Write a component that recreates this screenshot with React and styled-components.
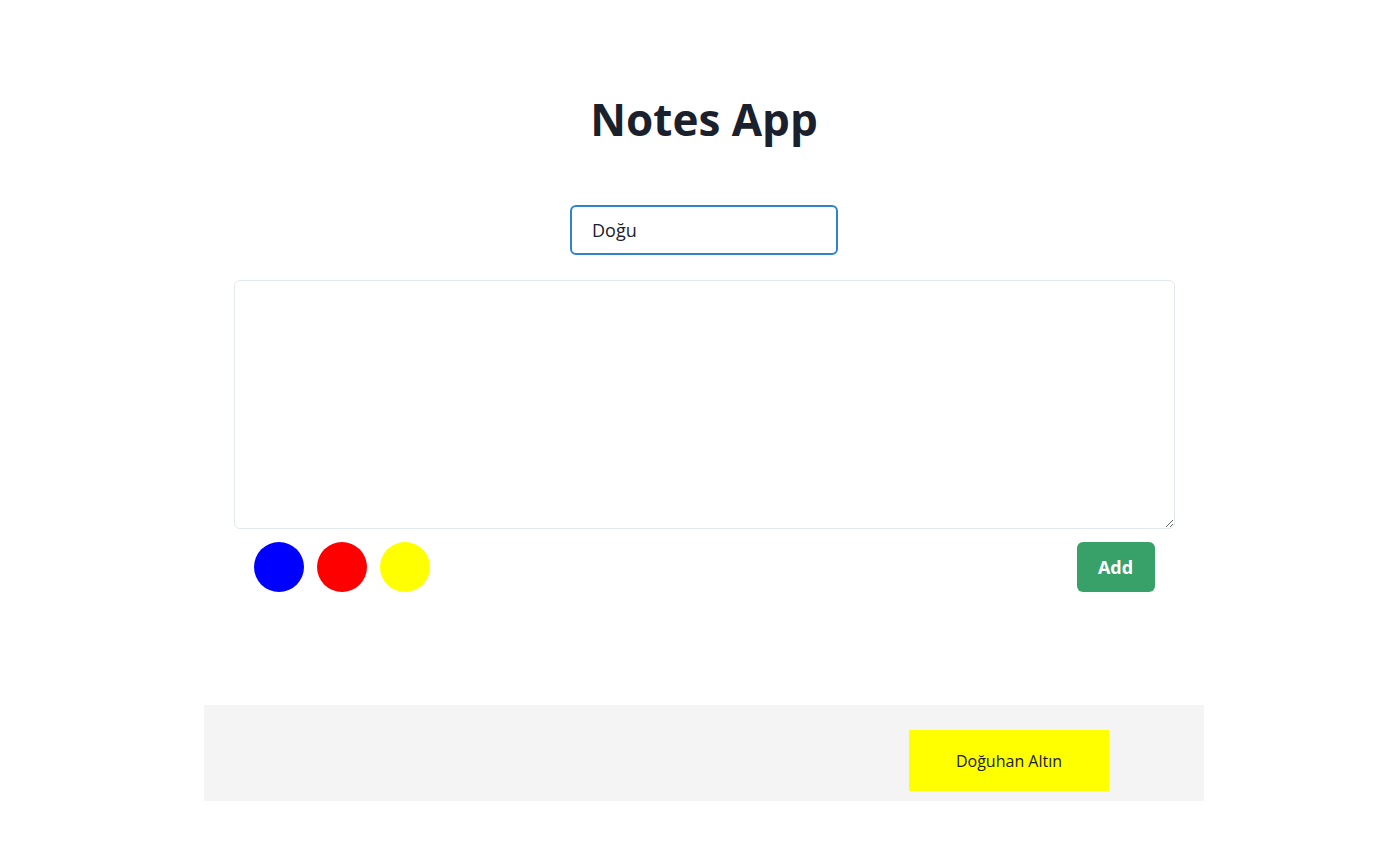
import React, { useState } from 'react';
import styled, { createGlobalStyle } from 'styled-components';

const GlobalStyle = createGlobalStyle`
  body {
    margin: 0;
    background: #fff;
    font-family: "Open Sans", "Noto Sans", sans-serif;
    color: #1A202C;
  }
  * { box-sizing: border-box; }
`;

const Page = styled.div`
  padding-left: 14px;
  padding-top: 85px;
`;

const Container = styled.div`
  width: 1000px;
  margin: 0 auto;
  display: flex;
  flex-direction: column;
  align-items: center;
`;

const Title = styled.h1`
  margin: 0;
  font-size: 44px;
  font-weight: 700;
  line-height: 68px;
  color: #1A202C;
`;

const SearchInput = styled.input`
  margin-top: 52px;
  width: 268px;
  height: 50px;
  padding: 0 20px;
  border: 2px solid #3182CE;
  border-radius: 6px;
  font-family: inherit;
  font-size: 18px;
  color: #1A202C;
  outline: none;
`;

const NoteArea = styled.textarea`
  margin-top: 25px;
  width: 941px;
  height: 249px;
  border: 1px solid #E2E8F0;
  border-radius: 6px;
  padding: 12px 16px;
  font-family: inherit;
  font-size: 16px;
  outline: none;
  display: block;
`;

const Actions = styled.div`
  margin-top: 13px;
  width: 941px;
  padding: 0 20px;
  display: flex;
  align-items: center;
  justify-content: space-between;
`;

const Colors = styled.div`
  display: flex;
  gap: 13px;
`;

const ColorDot = styled.button`
  width: 50px;
  height: 50px;
  border-radius: 50%;
  border: none;
  padding: 0;
  background: ${(p) => p.$color};
  cursor: pointer;
`;

const AddButton = styled.button`
  width: 78px;
  height: 50px;
  border: none;
  border-radius: 6px;
  background: #38A169;
  color: #fff;
  font-family: inherit;
  font-size: 18px;
  font-weight: 700;
  cursor: pointer;
`;

const Footer = styled.footer`
  margin-top: 113px;
  width: 1000px;
  height: 96px;
  background: #F4F4F4;
  padding: 25px 95px 10px 0;
  display: flex;
  justify-content: flex-end;
`;

const Signature = styled.div`
  width: 200px;
  height: 61px;
  background: #FFFF00;
  display: flex;
  align-items: center;
  justify-content: center;
  font-size: 16px;
  color: #1A202C;
`;

const App = () => {
  const [search, setSearch] = useState('Doğu');
  const [note, setNote] = useState('');

  return (
    <Page>
      <GlobalStyle />
      <Container>
        <Title>Notes App</Title>
        <SearchInput value={search} onChange={(e) => setSearch(e.target.value)} />
        <NoteArea value={note} onChange={(e) => setNote(e.target.value)} />
        <Actions>
          <Colors>
            <ColorDot $color="#0000FF" />
            <ColorDot $color="#FF0000" />
            <ColorDot $color="#FFFF00" />
          </Colors>
          <AddButton>Add</AddButton>
        </Actions>
        <Footer>
          <Signature>Doğuhan Altın</Signature>
        </Footer>
      </Container>
    </Page>
  );
};

export default App;
